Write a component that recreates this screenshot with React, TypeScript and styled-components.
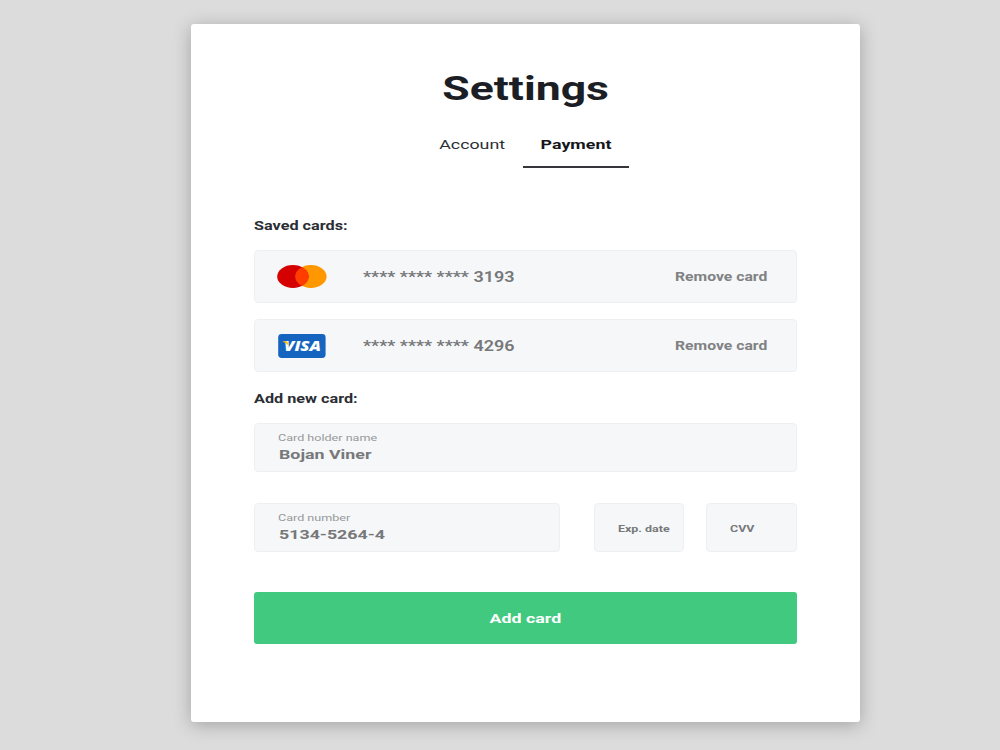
import { useState } from "react";
import styled, { createGlobalStyle, css } from "styled-components";

const GlobalStyle = createGlobalStyle`
  * {
    box-sizing: border-box;
  }
  body {
    margin: 0;
    height: 750px;
    overflow: hidden;
    background: #dcdcdc;
    font-family: Roboto, "Liberation Sans", sans-serif;
  }
`;

const tabs = ["Account", "Payment"];

const savedCards = [
  { type: "mastercard", last: "3193" },
  { type: "visa", last: "4296" },
];

const MasterCardLogo = () => (
  <svg width="50" height="24" viewBox="0 0 50 24">
    <ellipse cx="33.9" cy="11.5" rx="15.7" ry="11.4" fill="#ff9800" />
    <ellipse cx="15.9" cy="11.5" rx="15.7" ry="11.4" fill="#d50000" />
    <path
      d="M24.9 2.2 C29.2 4.4 31.6 7.8 31.6 11.5 C31.6 15.2 29.2 18.6 24.9 20.8 C20.6 18.6 18.2 15.2 18.2 11.5 C18.2 7.8 20.6 4.4 24.9 2.2 Z"
      fill="#ff3d00"
    />
  </svg>
);

const VisaLogo = () => (
  <svg width="50" height="26" viewBox="0 0 50 26">
    <rect x="1.2" y="1" width="47.4" height="24" rx="3.4" fill="#1565c0" />
    <text
      x="7"
      y="17.8"
      textLength="37"
      lengthAdjust="spacingAndGlyphs"
      fill="#fff"
      fontFamily="Open Sans, sans-serif"
      fontSize="13.4"
      fontWeight="800"
      fontStyle="italic"
    >
      VISA
    </text>
    <path d="M5.2 8.3 H9.2 Q10.6 8.4 10.9 9.6 L11.8 13 Q9.6 9.8 5.2 8.3 Z" fill="#ffc107" />
  </svg>
);

const App = () => {
  const [active, setActive] = useState("Payment");

  return (
    <Page>
      <GlobalStyle />
      <Panel>
        <Title>
          <Wide $center>Settings</Wide>
        </Title>
        <TabList>
          {tabs.map((tab) => (
            <Tab key={tab} $active={tab === active} onClick={() => setActive(tab)}>
              <Wide $center>{tab}</Wide>
            </Tab>
          ))}
        </TabList>

        <SectionTitle>
          <Wide>Saved cards:</Wide>
        </SectionTitle>
        <CardList>
          {savedCards.map(({ type, last }) => (
            <CardRow key={last}>
              <Logo>{type === "visa" ? <VisaLogo /> : <MasterCardLogo />}</Logo>
              <CardNumber>
                <Wide>**** **** **** {last}</Wide>
              </CardNumber>
              <RemoveButton>
                <Wide>Remove card</Wide>
              </RemoveButton>
            </CardRow>
          ))}
        </CardList>

        <SectionTitle>
          <Wide>Add new card:</Wide>
        </SectionTitle>
        <Field>
          <Label>
            <Wide>Card holder name</Wide>
          </Label>
          <Value>
            <Wide>Bojan Viner</Wide>
          </Value>
        </Field>
        <FieldRow>
          <Field>
            <Label>
              <Wide>Card number</Wide>
            </Label>
            <Value>
              <Wide>5134-5264-4</Wide>
            </Value>
          </Field>
          <ShortFields>
            <Field>
              <Placeholder>
                <Wide>Exp. date</Wide>
              </Placeholder>
            </Field>
            <Field>
              <Placeholder>
                <Wide>CVV</Wide>
              </Placeholder>
            </Field>
          </ShortFields>
        </FieldRow>
        <AddButton>
          <Wide $center>Add card</Wide>
        </AddButton>
      </Panel>
    </Page>
  );
};
export default App;

const Page = styled.main`
  height: 750px;
  padding: 24px 140px 28px 191px;
`;
const Panel = styled.section`
  display: flex;
  flex-direction: column;
  height: 698px;
  padding: 43px 63px 0;
  border-radius: 3px;
  background: #fff;
  box-shadow: 0 3px 18px rgba(0, 0, 0, 0.26);
`;
/* extended-width lettering */
const Wide = styled.span<{ $center?: boolean }>`
  display: inline-block;
  white-space: nowrap;
  transform: scaleX(1.31);
  transform-origin: ${({ $center }) => ($center ? "center" : "left")};
`;
const Title = styled.h1`
  margin: 0;
  color: #1b1e24;
  font-size: 34px;
  font-weight: 700;
  line-height: 42px;
  text-align: center;
`;
const TabList = styled.nav`
  display: flex;
  justify-content: center;
  margin-top: 13px;
  padding-right: 1px;
`;
const Tab = styled.button<{ $active: boolean }>`
  width: ${({ $active }) => ($active ? "106px" : "102px")};
  height: 46px;
  padding: 0 0 1px;
  border: 0;
  border-bottom: 2px solid ${({ $active }) => ($active ? "#34363b" : "transparent")};
  background: none;
  color: ${({ $active }) => ($active ? "#14161b" : "#2c2f35")};
  font-family: inherit;
  font-size: 13.6px;
  font-weight: ${({ $active }) => ($active ? 700 : 400)};
`;
const SectionTitle = styled.h2`
  margin: 0;
  color: #2a2d33;
  font-size: 12.4px;
  font-weight: 700;
  line-height: 16px;
  &:first-of-type {
    margin-top: 50px;
  }
`;
const box = css`
  border: 1px solid #edf0f3;
  border-radius: 4px;
  background: #f5f7f9;
`;
const CardList = styled.div`
  display: flex;
  flex-direction: column;
  gap: 16px;
  margin: 16px 0 19px;
`;
const CardRow = styled.div`
  ${box}
  display: flex;
  align-items: center;
  height: 53px;
  padding: 0 0 0 22px;
  color: #777879;
`;
const Logo = styled.div`
  display: flex;
  width: 86px;
`;
const CardNumber = styled.div`
  flex: 1;
  font-size: 13.75px;
  font-weight: 600;
`;
const RemoveButton = styled.button`
  width: 121px;
  padding: 1px 0 0;
  border: 0;
  background: none;
  color: #808182;
  font-family: inherit;
  font-size: 12px;
  font-weight: 700;
  text-align: left;
`;
const Field = styled.div`
  ${box}
  display: flex;
  flex-direction: column;
  justify-content: center;
  height: 49px;
  margin-top: 16px;
  padding: 0 0 0 24px;
`;
const FieldRow = styled.div`
  display: grid;
  grid-template-columns: 306px 203px;
  justify-content: space-between;
  margin-top: 15px;
`;
const ShortFields = styled.div`
  display: grid;
  grid-template-columns: 90px 91px;
  gap: 22px;
  ${Field} {
    padding: 1px 0 0 22.5px;
  }
`;
const Label = styled.div`
  margin-left: -1px;
  color: #97999a;
  font-size: 9.6px;
  line-height: 12px;
`;
const Value = styled.div`
  color: #777879;
  font-size: 13.6px;
  font-weight: 700;
  line-height: 20px;
`;
const Placeholder = styled.div`
  color: #777879;
  font-size: 9.5px;
  font-weight: 700;
`;
const AddButton = styled.button`
  height: 52px;
  margin-top: 40px;
  border: 0;
  border-radius: 3px;
  background: #42c980;
  color: #fff;
  font-family: inherit;
  font-size: 13.6px;
  font-weight: 700;
`;
